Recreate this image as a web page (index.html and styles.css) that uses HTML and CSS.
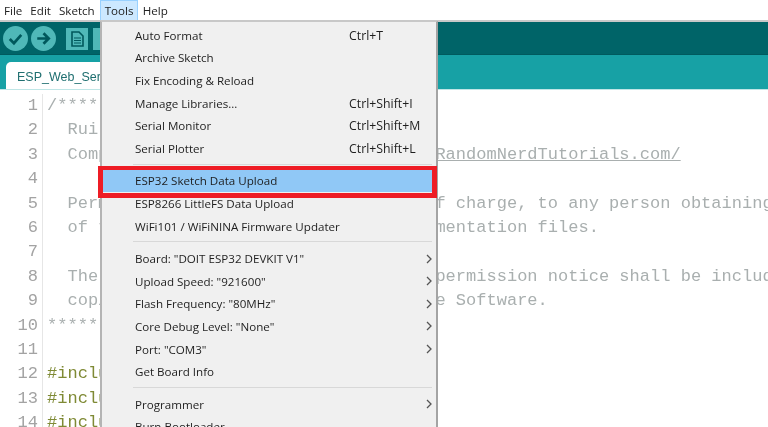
FILE: index.html
```html
<!DOCTYPE html>
<html lang="en">
<head>
<meta charset="utf-8">
<title>Arduino IDE - Tools menu</title>
<link rel="stylesheet" href="styles.css">
</head>
<body>
<div class="app">
  <nav class="menubar">
    <span class="top-item">File</span>
    <span class="top-item">Edit</span>
    <span class="top-item">Sketch</span>
    <span class="top-item active">Tools</span>
    <span class="top-item">Help</span>
  </nav>
  <div class="toolbar">
    <span class="round-btn">
      <svg viewBox="0 0 24 24" width="25" height="25"><path d="M6.5 12.5l4 4 7-8" fill="none" stroke="#00585c" stroke-width="2.6"/></svg>
    </span>
    <span class="round-btn">
      <svg viewBox="0 0 24 24" width="25" height="25"><path d="M6 12h10M12 7l5 5-5 5" fill="none" stroke="#00585c" stroke-width="2.6"/></svg>
    </span>
    <span class="square-btn first">
      <svg viewBox="0 0 22 22" width="22" height="22"><path d="M6 4h7l4 4v10H6z" fill="none" stroke="#00585c" stroke-width="1.6"/><path d="M8 10h7M8 12.5h7M8 15h7" stroke="#00585c" stroke-width="1"/></svg>
    </span>
    <span class="square-btn"></span>
  </div>
  <div class="tabbar">
    <span class="tab">ESP_Web_Server</span>
  </div>
  <main class="editor">
    <div class="line"><span class="num">1</span><span class="code">/*********</span></div>
    <div class="line"><span class="num">2</span><span class="code">  Rui Santos</span></div>
    <div class="line"><span class="num">3</span><span class="code">  Complete project details at https://<u>RandomNerdTutorials.com/</u></span></div>
    <div class="line"><span class="num">4</span><span class="code"></span></div>
    <div class="line"><span class="num">5</span><span class="code">  Permission is hereby granted, free of charge, to any person obtaining a copy</span></div>
    <div class="line"><span class="num">6</span><span class="code">  of this software and associated documentation files.</span></div>
    <div class="line"><span class="num">7</span><span class="code"></span></div>
    <div class="line"><span class="num">8</span><span class="code">  The above copyright notice and this permission notice shall be included in all</span></div>
    <div class="line"><span class="num">9</span><span class="code">  copies or substantial portions of the Software.</span></div>
    <div class="line"><span class="num">10</span><span class="code">*********/</span></div>
    <div class="line"><span class="num">11</span><span class="code"></span></div>
    <div class="line"><span class="num">12</span><span class="code include">#include &lt;Arduino.h&gt;</span></div>
    <div class="line"><span class="num">13</span><span class="code include">#include &lt;WiFi.h&gt;</span></div>
    <div class="line"><span class="num">14</span><span class="code include">#include &lt;AsyncTCP.h&gt;</span></div>
  </main>

  <div class="menu">
    <div class="row"><span>Auto Format</span><span class="shortcut">Ctrl+T</span></div>
    <div class="row"><span>Archive Sketch</span></div>
    <div class="row"><span>Fix Encoding &amp; Reload</span></div>
    <div class="row"><span>Manage Libraries...</span><span class="shortcut">Ctrl+Shift+I</span></div>
    <div class="row"><span>Serial Monitor</span><span class="shortcut">Ctrl+Shift+M</span></div>
    <div class="row"><span>Serial Plotter</span><span class="shortcut">Ctrl+Shift+L</span></div>
    <div class="sep"></div>
    <div class="row selected"><span>ESP32 Sketch Data Upload</span></div>
    <div class="row"><span>ESP8266 LittleFS Data Upload</span></div>
    <div class="row"><span>WiFi101 / WiFiNINA Firmware Updater</span></div>
    <div class="sep"></div>
    <div class="row sub"><span>Board: "DOIT ESP32 DEVKIT V1"</span><svg class="chev" viewBox="0 0 6 10" width="6" height="10"><path d="M1 1l4 4-4 4" fill="none" stroke="#555" stroke-width="1.3"/></svg></div>
    <div class="row sub"><span>Upload Speed: "921600"</span><svg class="chev" viewBox="0 0 6 10" width="6" height="10"><path d="M1 1l4 4-4 4" fill="none" stroke="#555" stroke-width="1.3"/></svg></div>
    <div class="row sub"><span>Flash Frequency: "80MHz"</span><svg class="chev" viewBox="0 0 6 10" width="6" height="10"><path d="M1 1l4 4-4 4" fill="none" stroke="#555" stroke-width="1.3"/></svg></div>
    <div class="row sub"><span>Core Debug Level: "None"</span><svg class="chev" viewBox="0 0 6 10" width="6" height="10"><path d="M1 1l4 4-4 4" fill="none" stroke="#555" stroke-width="1.3"/></svg></div>
    <div class="row sub"><span>Port: "COM3"</span><svg class="chev" viewBox="0 0 6 10" width="6" height="10"><path d="M1 1l4 4-4 4" fill="none" stroke="#555" stroke-width="1.3"/></svg></div>
    <div class="row"><span>Get Board Info</span></div>
    <div class="sep"></div>
    <div class="row sub"><span>Programmer</span><svg class="chev" viewBox="0 0 6 10" width="6" height="10"><path d="M1 1l4 4-4 4" fill="none" stroke="#555" stroke-width="1.3"/></svg></div>
    <div class="row"><span>Burn Bootloader</span></div>
  </div>
</div>
</body>
</html>
```
FILE: styles.css
```css
* {
  box-sizing: border-box;
}

html,
body {
  margin: 0;
  height: 100%;
  background: #fff;
  overflow: hidden;
}

.app {
  position: relative;
  width: 768px;
  height: 427px;
  overflow: hidden;
  display: flex;
  flex-direction: column;
  filter: blur(0.35px);
}

.menubar {
  display: flex;
  height: 20px;
  padding-left: 0;
  font: 11.6px "Open Sans", "Noto Sans", sans-serif;
  color: #222;
  background: #fff;
  flex: none;
}

.top-item {
  display: flex;
  align-items: center;
  padding: 0 4px;
}

.top-item.active {
  width: 38px;
  margin-left: 1px;
  margin-right: 1px;
  padding: 0 0 0 4px;
  background: #cce8ff;
  border: 1px solid #99d1ff;
  border-bottom: 0;
}

.toolbar {
  flex: none;
  height: 35px;
  display: flex;
  align-items: center;
  gap: 3px;
  padding: 1px 0 0 3px;
  background: #006468;
  border-top: 2px solid #c8c8c8;
  border-bottom: 1px solid #005a5e;
}

.round-btn {
  width: 25px;
  height: 25px;
  border-radius: 50%;
  background: #4fb8b8;
  display: flex;
}

.square-btn {
  width: 22px;
  height: 22px;
  background: #4fb8b8;
  display: flex;
  margin-left: 2px;
}

.square-btn.first {
  margin-left: 7px;
}

.tabbar {
  flex: none;
  height: 35px;
  padding: 7px 0 0 6px;
  background: #17a1a5;
  border-bottom: 1px solid #bfe6e6;
  display: flex;
}

.tab {
  width: 180px;
  background: #fff;
  border-radius: 5px 5px 0 0;
  padding: 8px 0 0 11px;
  font: 12.5px "Liberation Sans", Arial, sans-serif;
  color: #1f6f70;
  white-space: nowrap;
  overflow: hidden;
}

.editor {
  flex: 1;
  padding-top: 4px;
  font: 17.05px/24.42px "Liberation Mono", "Courier New", monospace;
  color: #a9afaf;
  background: #fff;
  overflow: hidden;
}

.line {
  display: flex;
  height: 24.42px;
}

.num {
  flex: none;
  width: 43px;
  padding-right: 4px;
  text-align: right;
  color: #a3a3a3;
  background: #fff;
  border-right: 1px solid #e6e6e6;
}

.code {
  padding-left: 4px;
  white-space: pre;
}

.include {
  color: #7f8a35;
}

.menu {
  position: absolute;
  left: 100px;
  top: 21px;
  width: 338px;
  height: 420px;
  padding: 2px 4px 0 1px;
  background: #f0f0f0;
  border-left: 2px solid #b4b4b4;
  border-right: 2px solid #a4a4a4;
  border-top: 1px solid #c8c8c8;
  font: 11.6px "Open Sans", "Noto Sans", sans-serif;
  color: #1e1e1e;
}

.row {
  position: relative;
  display: flex;
  align-items: center;
  height: 22.6px;
  padding-left: 32px;
  white-space: nowrap;
}

.shortcut {
  position: absolute;
  left: 246px;
  font-size: 12.3px;
}

.chev {
  position: absolute;
  right: 0;
}

.sep {
  height: 10px;
  margin-left: 30px;
  padding-top: 4px;
}

.sep::before {
  content: "";
  display: block;
  height: 1px;
  background: #d8d8d8;
}

.selected {
  background: #90c8f6;
}

.selected::after {
  content: "";
  position: absolute;
  left: -5px;
  right: -5px;
  top: -4px;
  bottom: -6px;
  border: 5px solid #ee1c25;
  border-top-width: 4px;
}
```
